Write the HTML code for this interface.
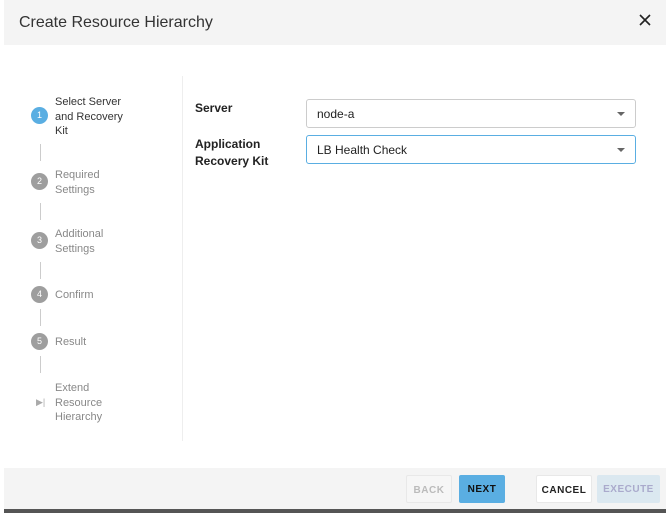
<!DOCTYPE html>
<html><head><meta charset="utf-8"><style>
*{margin:0;padding:0;box-sizing:border-box}
body{width:670px;height:513px;background:#fff;font-family:"Liberation Sans",sans-serif;position:relative;overflow:hidden}
.a{position:absolute}
.hdr{left:4px;top:0;width:662px;height:45px;background:#f4f4f4}
.title{left:19px;top:14px;font-size:16px;color:#333}
.circ{width:17px;height:17px;border-radius:50%;background:#9e9e9e;color:#fff;font-size:9px;text-align:center;line-height:17px}
.lbl{font-size:11px;line-height:14.5px;color:#888}
.vl{width:1px;background:#ccc;left:40px}
.sep{left:182px;top:76px;width:1px;height:365px;background:#eee}
.fl{font-size:12px;font-weight:bold;color:#222;line-height:17px}
.sel{height:29px;border:1px solid #ccc;border-radius:3px;font-size:12px;color:#222;padding:7px 0 0 10px}
.sel:after{content:"";position:absolute;right:10px;top:12px;border-left:4px solid transparent;border-right:4px solid transparent;border-top:4px solid #666}
.ftr{left:4px;top:468px;width:662px;height:41px;background:#f4f4f4}
.bar{left:4px;top:509px;width:662px;height:4px;background:#555}
.btn{height:28px;border-radius:2px;font-size:10px;font-weight:bold;letter-spacing:.5px;text-align:center;line-height:29px}
</style></head><body>
<div class="a hdr"></div>
<div class="a title">Create Resource Hierarchy</div>
<svg class="a" style="left:639px;top:14px" width="12" height="12" viewBox="0 0 12 12"><path d="M1 1L11 11M11 1L1 11" stroke="#222" stroke-width="1.6"/></svg>

<div class="a circ" style="left:31px;top:107px;background:#5aaee2">1</div>
<div class="a lbl" style="left:55px;top:95px;color:#333">Select Server<br>and Recovery<br>Kit</div>
<div class="a vl" style="top:144px;height:17px"></div>
<div class="a circ" style="left:31px;top:173px">2</div>
<div class="a lbl" style="left:55px;top:168px">Required<br>Settings</div>
<div class="a vl" style="top:203px;height:17px"></div>
<div class="a circ" style="left:31px;top:232px">3</div>
<div class="a lbl" style="left:55px;top:227px">Additional<br>Settings</div>
<div class="a vl" style="top:262px;height:17px"></div>
<div class="a circ" style="left:31px;top:286px">4</div>
<div class="a lbl" style="left:55px;top:288px">Confirm</div>
<div class="a vl" style="top:309px;height:17px"></div>
<div class="a circ" style="left:31px;top:333px">5</div>
<div class="a lbl" style="left:55px;top:335px">Result</div>
<div class="a vl" style="top:356px;height:17px"></div>
<div class="a lbl" style="left:36px;top:395px;font-size:9px;color:#aaa">▶|</div>
<div class="a lbl" style="left:55px;top:381px">Extend<br>Resource<br>Hierarchy</div>

<div class="a sep"></div>
<div class="a fl" style="left:195px;top:100px">Server</div>
<div class="a sel" style="left:306px;top:99px;width:330px">node-a</div>
<div class="a fl" style="left:195px;top:136px">Application<br>Recovery Kit</div>
<div class="a sel" style="left:306px;top:135px;width:330px;border-color:#5aaee2">LB Health Check</div>

<div class="a ftr"></div>
<div class="a bar"></div>
<div class="a btn" style="left:406px;top:475px;width:46px;background:#f6f6f6;color:#bbb;border:1px solid #e8e8e8">BACK</div>
<div class="a btn" style="left:459px;top:475px;width:46px;background:#5aaee2;color:#111">NEXT</div>
<div class="a btn" style="left:536px;top:475px;width:56px;background:#fff;color:#222;border:1px solid #e8e8e8">CANCEL</div>
<div class="a btn" style="left:597px;top:475px;width:63px;background:#dbe8f0;color:#aac">EXECUTE</div>
</body></html>
